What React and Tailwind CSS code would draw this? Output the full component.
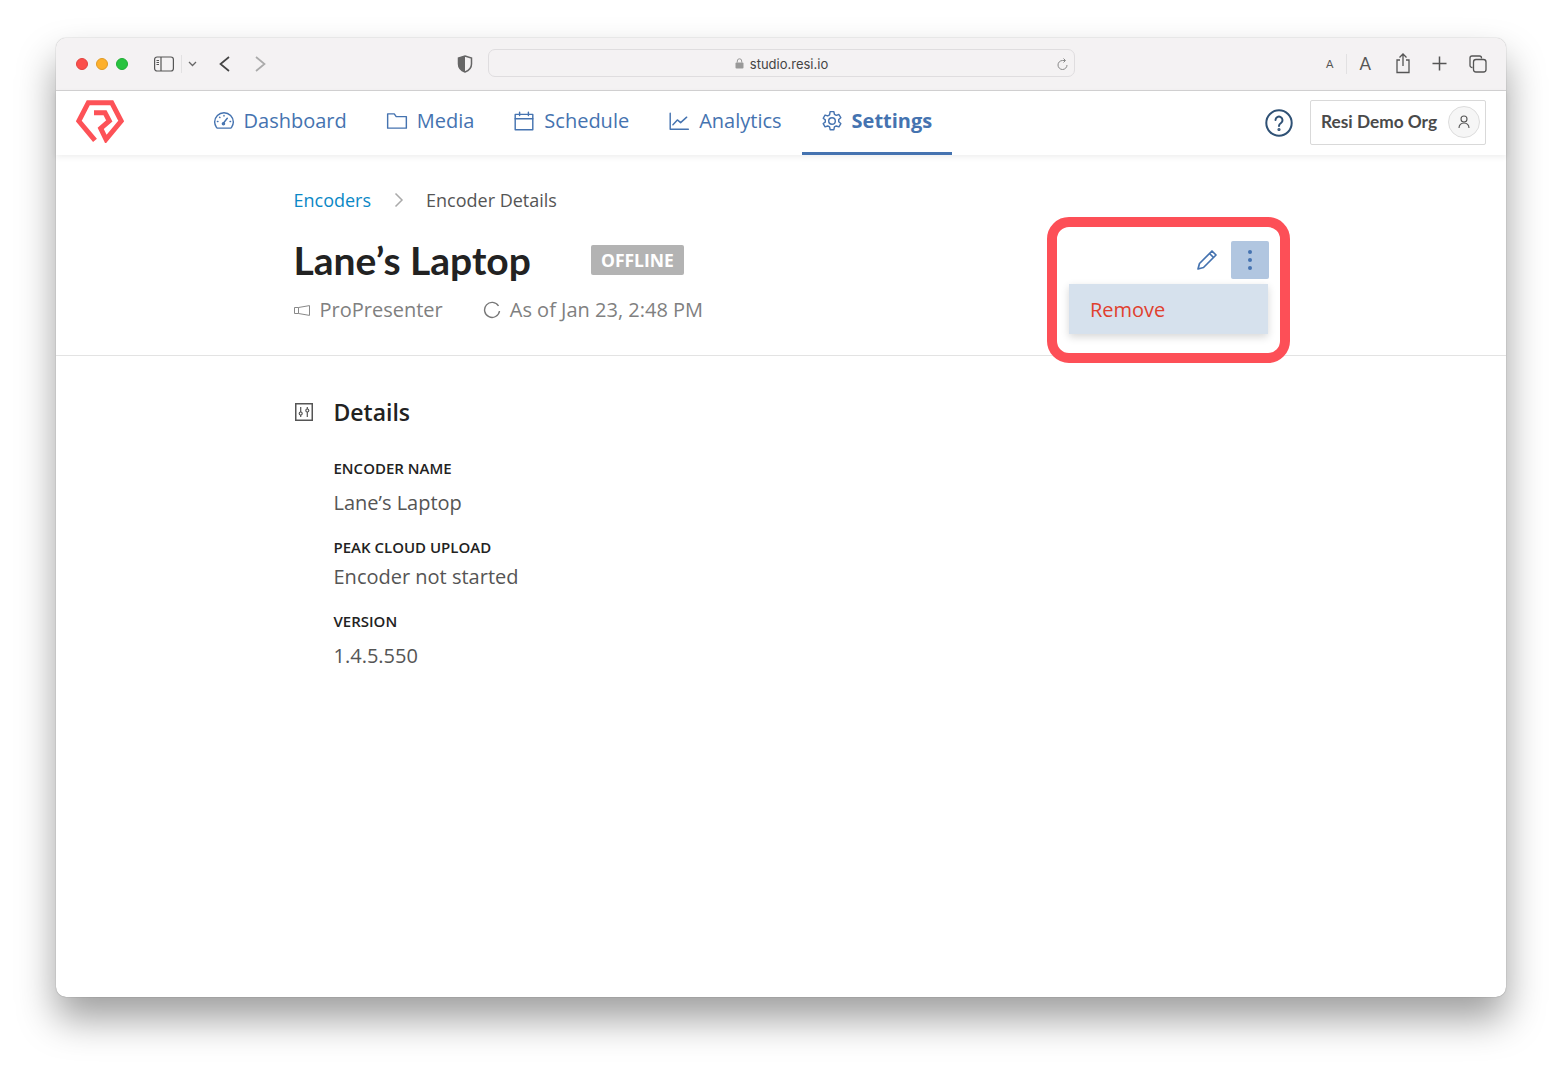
import React from "react";

const open = "font-['Open_Sans',sans-serif]";
const lato = "font-['Lato',sans-serif]";

function Nav({ icon, label, active }) {
  return (
    <div className={`flex h-[64px] items-center gap-[10px] px-[20px] pb-[2px] border-b-[3px] ${active ? "border-[#4573b0] font-bold" : "border-transparent"}`}>
      {icon}
      <span className="text-[20px] leading-[28px] text-[#4573b0]">{label}</span>
    </div>
  );
}

const S = ({ children, c = "#4573b0", sw = 1.3 }) => (
  <svg className="-mx-[1px]" width="22" height="22" viewBox="0 0 20 20" fill="none" stroke={c} strokeWidth={sw} strokeLinecap="round" strokeLinejoin="round">{children}</svg>
);

const Gauge = () => (
  <S>
    <path d="M4 16.5h12a1.5 1.5 0 0 0 1-1A8.2 8.2 0 0 0 18.500 11 8.500 8.500 0 0 0 1.500 11a8.200 8.200 0 0 0 1.500 4.500 1.500 1.500 0 0 0 1 1Z" />
    <path d="M9 12.500 13 7.500" />
    <path d="M10 5v.5M6 6.500l.3.3M4 10.500h.5M15.500 10.500h.5" />
    <circle cx="9.500" cy="12.500" r="1" />
  </S>
);
const Folder = () => (
  <S>
    <path d="M1.500 3.500h6l1.800 2.500h9.200v10.500h-17Z" />
  </S>
);
const Cal = () => (
  <S>
    <rect x="2" y="4" width="16" height="14" />
    <path d="M2 8h16M6 2v3M14 2v3" />
  </S>
);
const Chart = () => (
  <S>
    <path d="M2 3v14.500h16.500" />
    <path d="M4.500 13.500l4-4.500 3 2.500 5.500-5" />
  </S>
);
const Gear = () => (
  <S>
    <path d="M8.300 1.500h3.400l.5 2.500 1.700.9 2.400-.8 1.700 2.900-1.900 1.700v2l1.900 1.600-1.700 3-2.400-.8-1.700.9-.5 2.500H8.300l-.5-2.500-1.700-.9-2.400.8-1.700-3L3.900 11V9L2 7.500l1.700-2.900 2.400.8 1.700-.9Z" />
    <circle cx="10" cy="10" r="3" />
  </S>
);

function Field({ label, value, cls, gap }) {
  return (
    <div className={cls}>
      <div className="text-[15px] leading-[20px] font-semibold text-[#222]">{label}</div>
      <div className={`${gap} text-[20px] leading-[28px] text-[#555]`}>{value}</div>
    </div>
  );
}

export default function App() {
  return (
    <div className={`w-[1562px] h-[1071px] bg-white overflow-hidden pl-[56px] pt-[38px] ${open}`}>
      <div className="relative w-[1450px] h-[959px] rounded-[10px] bg-white shadow-[0_22px_38px_rgba(0,0,0,0.38),0_0_1px_rgba(0,0,0,0.5)] overflow-visible">
        {/* Safari toolbar */}
        <div className="h-[53px] rounded-t-[10px] bg-[#f4f2f3] border-b border-[#d3d2d3] flex items-center pb-[1px]">
          <div className="flex items-center gap-[8px] ml-[20px]">
            <span className="w-[12px] h-[12px] rounded-full bg-[#fb4f4b] border border-[#e2433f]" />
            <span className="w-[12px] h-[12px] rounded-full bg-[#fdb02c] border border-[#e09a24]" />
            <span className="w-[12px] h-[12px] rounded-full bg-[#27c33f] border border-[#1fad35]" />
          </div>
          <div className="ml-[26px] flex items-center">
            <svg width="20" height="16" viewBox="0 0 20 16" fill="none" stroke="#555" strokeWidth="1.200">
              <rect x="0.600" y="1" width="18.800" height="14" rx="2.500" />
              <path d="M7 1v14" />
              <path d="M2.500 4.500h2.500M2.500 6.500h2.500M2.500 8.500h2.500" />
            </svg>
            <div className="ml-[7px] w-px h-[18px] bg-[#e2e1e2]" />
            <svg className="ml-[6px]" width="9" height="6" viewBox="0 0 9 6" fill="none" stroke="#666" strokeWidth="1.300"><path d="M1 1l3.500 3.500L8 1" /></svg>
            <svg className="ml-[22px]" width="12" height="16" viewBox="0 0 12 16" fill="none" stroke="#444" strokeWidth="1.700"><path d="M10 1 1.500 8l8.500 7" /></svg>
            <svg className="ml-[24px]" width="12" height="16" viewBox="0 0 12 16" fill="none" stroke="#aaa" strokeWidth="1.700"><path d="M1 1l8.500 7L1 15" /></svg>
          </div>
          <svg className="ml-[190px]" width="16" height="18" viewBox="0 0 16 18">
            <path d="M8 1 14.500 3v6c0 4-3 6.700-6.500 8C4.500 15.700 1.500 13 1.500 9V3Z" fill="#f4f2f3" stroke="#666" strokeWidth="1.500" />
            <path d="M8 1 1.500 3v6c0 4 3 6.700 6.500 8Z" fill="#666" />
          </svg>
          <div className="ml-[15px] mb-[2px] relative w-[587px] h-[28px] rounded-[7px] border border-[#dfdddf] bg-[#f4f2f3] flex items-center justify-center gap-[6px] pt-[2px]">
            <svg width="9" height="11" viewBox="0 0 9 11" fill="#999"><rect x="0.500" y="4.500" width="8" height="6" rx="1" /><path d="M2.300 4.500V3a2.200 2.200 0 0 1 4.400 0v1.500" fill="none" stroke="#999" /></svg>
            <span className="font-['Inter',sans-serif] text-[13px] leading-[16px] text-[#444]">studio.resi.io</span>
            <svg className="absolute right-[5px] top-[8px]" width="12" height="13" viewBox="0 0 12 13" fill="none" stroke="#888" strokeWidth="1"><path d="M10 7a4.500 4.500 0 1 1-4.500-4.500H8" /><path d="M6.500 .5 8.500 2.500l-2 2" /></svg>
          </div>
          <div className="ml-auto mr-[19px] flex items-center">
            <span className={`${lato} text-[11px] text-[#555] leading-[16px]`}>A</span>
            <div className="ml-[13px] w-px h-[20px] bg-[#e2e1e2]" />
            <span className={`ml-[12px] ${lato} text-[17px] text-[#555] leading-[20px]`}>A</span>
            <svg className="ml-[24px]" width="16" height="21" viewBox="0 0 16 21" fill="none" stroke="#555" strokeWidth="1.300"><path d="M5 7H2v12.500h12V7h-3" /><path d="M8 13V1.500M4.500 4.500 8 1l3.500 3.500" /></svg>
            <svg className="ml-[21px]" width="15" height="15" viewBox="0 0 15 15" fill="none" stroke="#555" strokeWidth="1.500"><path d="M7.500 .5v14M.5 7.500h14" /></svg>
            <svg className="ml-[22px]" width="18" height="18" viewBox="0 0 18 18" fill="none" stroke="#555" strokeWidth="1.300"><path d="M3.500 12.500h-.5a2 2 0 0 1-2-2V3a2 2 0 0 1 2-2h7.500a2 2 0 0 1 2 2v.5" /><rect x="4.500" y="4.500" width="12.500" height="12.500" rx="2.500" /></svg>
          </div>
        </div>

        {/* App nav */}
        <div className="relative h-[64px] flex items-center bg-white shadow-[0_2px_6px_rgba(0,0,0,0.07)]">
          <svg className="ml-[20px] mb-[3px]" width="48" height="43" viewBox="0 0 48 43" fill="none" stroke="#fd5257" strokeWidth="5" strokeLinejoin="miter">
            <path d="M19 40.300 2.800 21 12.300 2.700h23.400L45.200 21 30 39.300 24.700 28.300 33.300 21 29 12.700H18" />
          </svg>
          <div className="ml-[69.500px] flex">
            <Nav icon={<Gauge />} label="Dashboard" />
            <Nav icon={<Folder />} label="Media" />
            <Nav icon={<Cal />} label="Schedule" />
            <Nav icon={<Chart />} label="Analytics" />
            <Nav icon={<Gear />} label="Settings" active />
          </div>
          <div className="ml-auto mr-[20px] flex items-center">
            <svg width="28" height="28" viewBox="0 0 28 28" fill="none" stroke="#2f5175" strokeWidth="2"><circle cx="14" cy="14" r="12.700" /><path d="M10.500 11a3.500 3.500 0 1 1 5.500 3c-1.300.9-2 1.500-2 3" strokeLinecap="round" /><circle cx="14" cy="20.500" r=".6" fill="#2f5175" /></svg>
            <div className="ml-[17px] mb-[2px] w-[176px] h-[45px] rounded-[2px] border border-[#d9d9d9] flex items-center pl-[10px]">
              <span className={`${lato} text-[17.300px] font-bold text-[#4a4a4a] leading-[24px]`}>Resi Demo Org</span>
              <div className="ml-[11px] w-[32px] h-[32px] rounded-full border border-[#ddd] bg-[#f6f6f6] flex items-center justify-center">
                <svg width="12" height="14" viewBox="0 0 12 14" fill="none" stroke="#555" strokeWidth="1.100"><circle cx="6" cy="4" r="3" /><path d="M1 13c0-3 2-5 5-5s5 2 5 5" /></svg>
              </div>
            </div>
          </div>
        </div>

        {/* Header */}
        <div className="h-[201px] pl-[237.500px] pt-[32px] border-b border-[#e3e3e3]">
          <div className="flex items-center h-[26px] text-[18px] leading-[26px]">
            <span className="text-[#0a88c6]">Encoders</span>
            <svg className="ml-[23px]" width="10" height="16" viewBox="0 0 10 16" fill="none" stroke="#aaa" strokeWidth="1.500"><path d="M1.500 1.500 8 8l-6.500 6.500" /></svg>
            <span className="ml-[22px] text-[#555]">Encoder Details</span>
          </div>
          <div className="mt-[22px] flex items-center h-[50px]">
            <h1 className={`${lato} text-[39px] font-bold leading-[50px] text-[#222]`}>Lane’s Laptop</h1>
            <span className="ml-[60px] w-[93px] h-[30px] rounded-[2px] bg-[#b3b3b3] text-white text-[17.500px] font-bold leading-[30px] text-center">OFFLINE</span>
          </div>
          <div className="mt-[11px] flex items-center text-[20px] leading-[28px] text-[#808080]">
            <svg width="16" height="11" viewBox="0 0 16 11" fill="none" stroke="#888" strokeWidth="1"><path d="M.5 2.500h4v6h-4Z" /><path d="M4.500 2.500 15.500.6v9.800L4.500 8.500" /></svg>
            <span className="ml-[10px]">ProPresenter</span>
            <svg className="ml-[40.500px]" width="18" height="18" viewBox="0 0 18 18" fill="none" stroke="#777" strokeWidth="1.400"><path d="M15.500 5A7.500 7.500 0 1 0 16.500 10" /></svg>
            <span className="ml-[8.500px]">As of Jan 23, 2:48 PM</span>
          </div>
        </div>

        {/* Details */}
        <div className="pl-[237.500px] pt-[41px]">
          <div className="flex items-center h-[30px]">
            <svg width="20" height="18" viewBox="0 0 20 18" fill="none" stroke="#555" strokeWidth="1.500">
              <rect x="1.750" y="0.750" width="16.500" height="16.500" />
              <path d="M6.700 4v10M13.300 4v10" strokeWidth="1.200" />
              <circle cx="6.700" cy="10.500" r="1.500" fill="#fff" strokeWidth="1.200" />
              <circle cx="13.300" cy="7.500" r="1.500" fill="#fff" strokeWidth="1.200" />
            </svg>
            <span className="ml-[20px] text-[23px] leading-[30px] font-semibold text-[#222]">Details</span>
          </div>
          <div className="pl-[40px]">
            <Field cls="mt-[31px]" gap="mt-[11px]" label="ENCODER NAME" value="Lane’s Laptop" />
            <Field cls="mt-[20px]" gap="mt-[6px]" label="PEAK CLOUD UPLOAD" value="Encoder not started" />
            <Field cls="mt-[20px]" gap="mt-[11px]" label="VERSION" value="1.4.5.550" />
          </div>
        </div>

        {/* Highlighted action menu */}
        <div className="absolute left-[991px] top-[179px] w-[243px] h-[146px] rounded-[22px] border-[10px] border-[#fd4f57] bg-white pt-[14px] pl-[12px]">
          <div className="flex items-center justify-end w-[200px]">
            <svg className="mr-[13px]" width="22" height="22" viewBox="0 0 22 22" fill="none" stroke="#4573b0" strokeWidth="1.700" strokeLinejoin="round"><path d="M16 2l4 4L7.500 18.500 2 20l1.500-5.500Z" /><path d="M13.500 4.500l4 4" /></svg>
            <div className="w-[38px] h-[38px] rounded-[2px] bg-[#b1c6e0] flex flex-col items-center justify-center gap-[4px]">
              <span className="w-[4px] h-[4px] rounded-full bg-[#4573b0]" />
              <span className="w-[4px] h-[4px] rounded-full bg-[#4573b0]" />
              <span className="w-[4px] h-[4px] rounded-full bg-[#4573b0]" />
            </div>
          </div>
          <div className="mt-[5px] w-[199px] h-[50px] bg-[#d6e1ed] shadow-[0_3px_8px_rgba(0,0,0,0.16)] pl-[21px] text-[20px] leading-[52px] text-[#e0402e]">Remove</div>
        </div>
      </div>
    </div>
  );
}
